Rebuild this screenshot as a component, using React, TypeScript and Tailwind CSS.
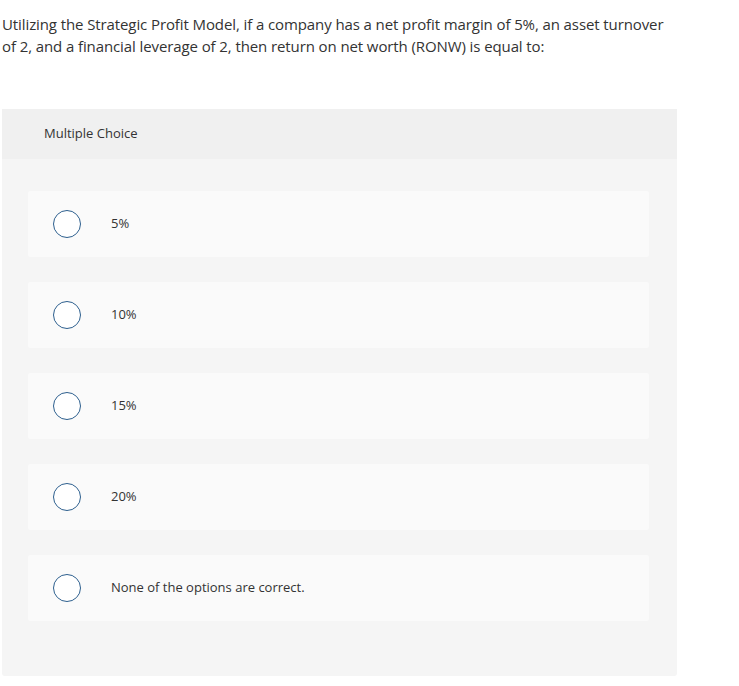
import React from 'react';

const options = ['5%', '10%', '15%', '20%', 'None of the options are correct.'];

const App: React.FC = () => {
    return (
        <div className="bg-white min-h-[686px] text-[#333333]" style={{ fontFamily: '"Open Sans", "Liberation Sans", sans-serif' }}>
            <p className="pl-[2px] pt-[13px] pr-[60px] text-[15px] leading-[22px] tracking-[-0.1px]">
                Utilizing the Strategic Profit Model, if a company has a net profit margin of 5%, an asset turnover
                of 2, and a financial leverage of 2, then return on net worth (RONW) is equal to:
            </p>
            <div className="ml-[2px] mt-[52px] w-[675px] rounded-b-[3px] bg-[#f5f5f5] pb-[55px]">
                <div className="flex h-[50px] items-center bg-[#f0f0f0] pl-[42px] text-[13px]">Multiple Choice</div>
                <div className="flex flex-col gap-[25px] pl-[26px] pr-[28px] pt-[32px]">
                    {options.map((opt) => (
                        <div key={opt} className="flex h-[66px] items-center rounded-[2px] bg-[#fafafa]">
                            <span className="ml-[25px] h-[28px] w-[28px] rounded-full border-[1.5px] border-[#2d5f8e] bg-white" />
                            <span className="ml-[30px] text-[13px]">{opt}</span>
                        </div>
                    ))}
                </div>
            </div>
        </div>
    );
};

export default App;
